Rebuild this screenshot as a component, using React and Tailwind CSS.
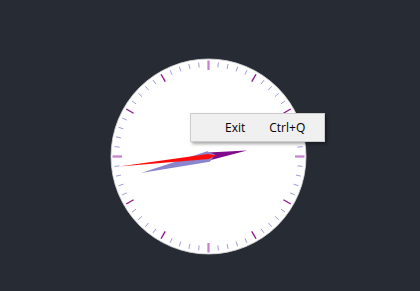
import React from 'react'

const CX = 208.5
const CY = 156.5
const R = 97.5

const ticks = Array.from({ length: 60 }, (_, i) => {
  const a = (i * 6 * Math.PI) / 180
  const quarter = i % 15 === 0
  const hour = i % 5 === 0
  const r1 = quarter ? 96 : hour ? 95 : 94.5
  const r2 = quarter ? 86.5 : hour ? 86.5 : 89.5
  return {
    x1: CX + Math.sin(a) * r1,
    y1: CY - Math.cos(a) * r1,
    x2: CX + Math.sin(a) * r2,
    y2: CY - Math.cos(a) * r2,
    color: quarter ? '#c77fd0' : hour ? '#8e1a8e' : '#9c9cdc',
    w: quarter ? 2.2 : hour ? 1.4 : 1,
  }
})

// hand polygon: tip, base width, tail length
const hand = (tx, ty, w, tail) => {
  const dx = tx - CX
  const dy = ty - CY
  const len = Math.hypot(dx, dy)
  const ux = dx / len
  const uy = dy / len
  const px = -uy
  const py = ux
  const pts = [
    [tx, ty],
    [CX + px * w, CY + py * w],
    [CX - ux * tail, CY - uy * tail],
    [CX - px * w, CY - py * w],
  ]
  return pts.map((p) => p.join(',')).join(' ')
}

const Clock = () => (
  <svg width="420" height="291" viewBox="0 0 420 291" className="block">
    <circle cx={CX} cy={CY} r={R} fill="#ffffff" stroke="#d8d8dc" strokeWidth="0.8" />
    {ticks.map((t, i) => (
      <line key={i} x1={t.x1} y1={t.y1} x2={t.x2} y2={t.y2} stroke={t.color} strokeWidth={t.w} />
    ))}
    <polygon points={hand(247, 150.5, 4, 4)} fill="#7f0a8a" />
    <polygon points={hand(141, 173, 5.5, 7)} fill="#8a85cc" />
    <polygon points={hand(119, 166.5, 2.4, 8)} fill="#ff0a0a" />
  </svg>
)

export default function App() {
  return (
    <div className="relative h-[291px] w-[420px] overflow-hidden bg-[#272b34]">
      <Clock />
      <div className="absolute left-[190px] top-[113px] flex h-[29px] w-[135px] items-center border border-[#cccccc] bg-[#f0f0f0] text-[12px] text-black shadow-[2px_2px_3px_rgba(0,0,0,0.35)] font-['Open_Sans','Noto_Sans',sans-serif]">
        <span className="ml-[34px]">Exit</span>
        <span className="ml-[24px]">Ctrl+Q</span>
      </div>
    </div>
  )
}
